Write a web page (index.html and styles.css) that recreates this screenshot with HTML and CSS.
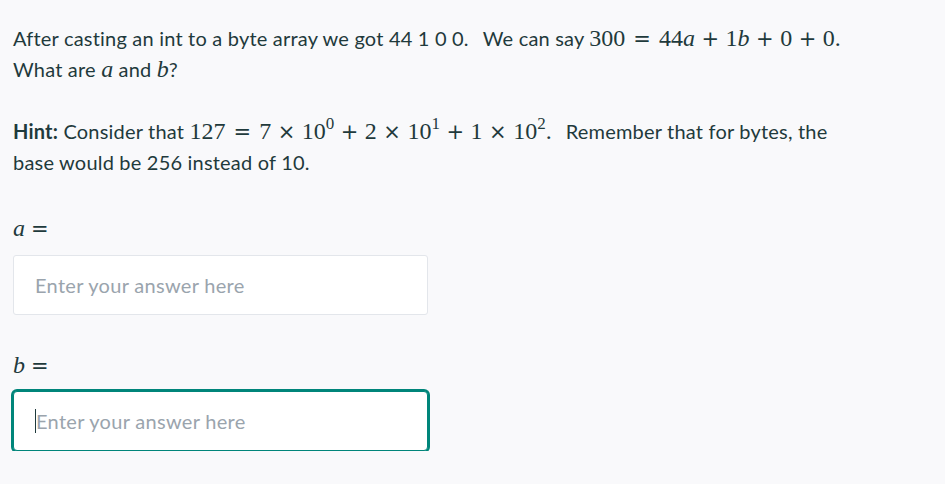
FILE: index.html
```html
<!DOCTYPE html>
<html>
<head>
<meta charset="utf-8">
<link rel="stylesheet" href="styles.css">
</head>
<body>
<div class="page">
  <p class="para">After casting an int to a byte array we got 44 1 0 0.<span class="gap"></span>We can say <span class="m">300<span class="op rel">=</span>44<i>a</i><span class="op bin">+</span>1<i>b</i><span class="op bin">+</span>0<span class="op bin">+</span>0.</span> What are <span class="m"><i>a</i></span> and <span class="m"><i>b</i></span>?</p>
  <p class="para hint"><b>Hint:</b> Consider that <span class="m">127<span class="op rel">=</span>7<span class="op bin">×</span>10<sup>0</sup><span class="op bin">+</span>2<span class="op bin">×</span>10<sup>1</sup><span class="op bin">+</span>1<span class="op bin">×</span>10<sup>2</sup>.</span><span class="gap"></span>Remember that for bytes, the base would be 256 instead of 10.</p>
  <div class="field">
    <div class="label m"><i>a</i><span class="op rel">=</span></div>
    <div class="input"><span class="ph">Enter your answer here</span></div>
  </div>
  <div class="field">
    <div class="label m"><i>b</i><span class="op rel">=</span></div>
    <div class="input focus"><span class="caret"></span><span class="ph">Enter your answer here</span></div>
  </div>
</div>
</body>
</html>
```
FILE: styles.css
```css
html, body {
  margin: 0;
  padding: 0;
  background: #f9f9fb;
}
.page {
  padding: 23px 13px 0 13px;
  font-family: Lato, "Liberation Sans", sans-serif;
  font-size: 20px;
  color: #1f3a3c;
  width: 850px;
}
.para {
  margin: 0 0 31px 0;
  line-height: 31px;
  letter-spacing: 0.2px;
}
.gap {
  display: inline-block;
  width: 14px;
}
.hint b {
  font-weight: 700;
}
.m {
  font-family: "Liberation Serif", "DejaVu Serif", serif;
  font-size: 24px;
  line-height: 1;
  letter-spacing: 0;
}
.m i {
  font-style: italic;
}
.op {
  font-family: "DejaVu Sans", sans-serif;
  font-size: 21px;
}
.rel {
  margin: 0 8px;
}
.bin {
  margin: 0 6.5px;
}
.m sup {
  font-size: 17px;
  line-height: 0;
  vertical-align: 10px;
}
.field {
  display: flex;
  flex-direction: column;
}
.label {
  line-height: 30px;
  margin-top: 4px;
  margin-bottom: 11px;
}
.label .rel {
  margin: 0 6px;
}
.field + .field .label {
  margin-top: 35px;
  margin-bottom: 10px;
}
.input {
  box-sizing: border-box;
  width: 415px;
  height: 60px;
  background: #fff;
  border: 1px solid #e3e6eb;
  border-radius: 3px;
  display: flex;
  align-items: center;
  padding-left: 21px;
  font-size: 20px;
  letter-spacing: 0.3px;
}
.input.focus {
  border-color: #00857a;
  box-shadow: 0 0 0 2px #00857a;
  border-radius: 4px;
}
.ph {
  color: #9aa4ad;
}
.caret {
  width: 1px;
  height: 24px;
  background: #1f3a3c;
}
```
